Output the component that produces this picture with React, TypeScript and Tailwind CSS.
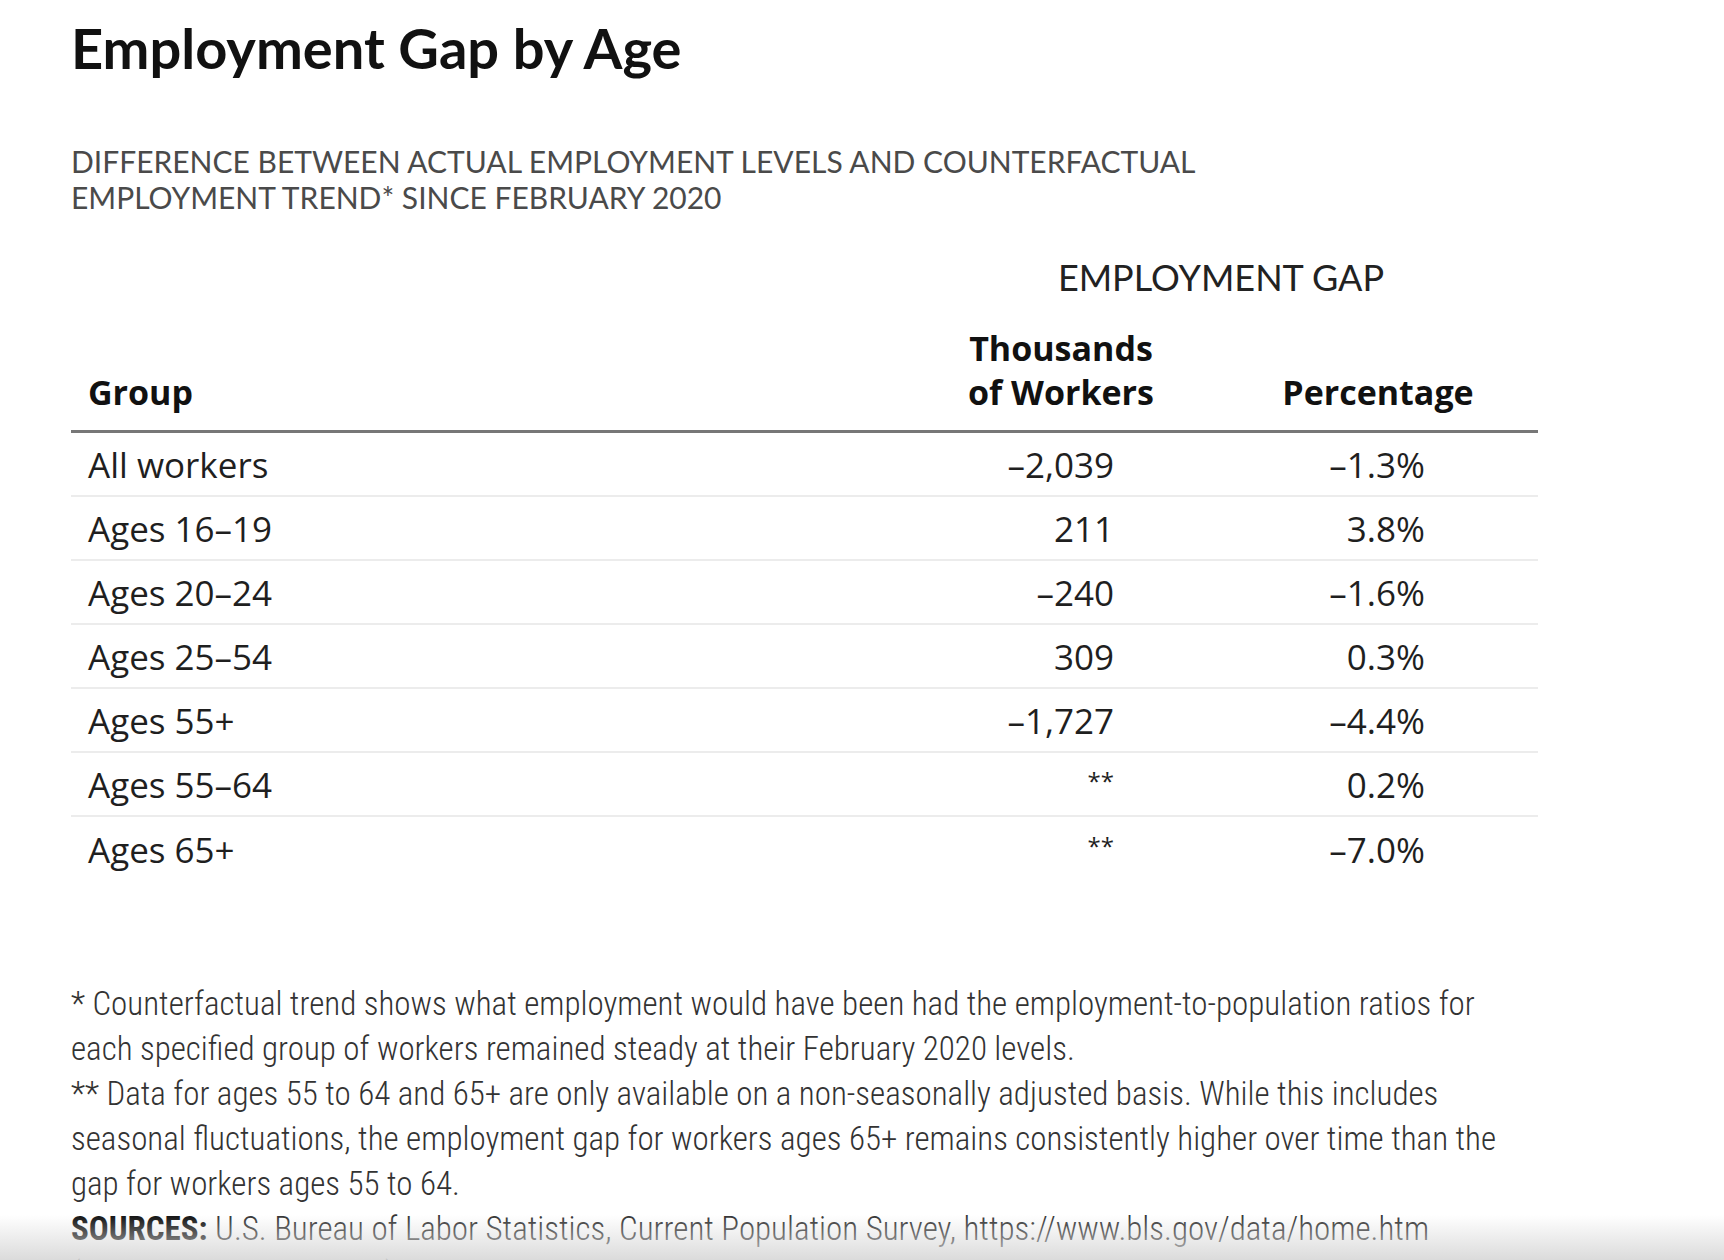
import React from "react";

const rows: [string, string, string][] = [
  ["All workers", "–2,039", "–1.3%"],
  ["Ages 16–19", "211", "3.8%"],
  ["Ages 20–24", "–240", "–1.6%"],
  ["Ages 25–54", "309", "0.3%"],
  ["Ages 55+", "–1,727", "–4.4%"],
  ["Ages 55–64", "**", "0.2%"],
  ["Ages 65+", "**", "–7.0%"],
];

const body = { fontFamily: "'Open Sans', Lato, sans-serif" };

export default function App() {
  return (
    <div className="relative w-[1724px] h-[1260px] overflow-hidden bg-white text-[#1a1a1a]">
      <div className="pl-[71px] pt-[16px]" style={{ fontFamily: "Lato, 'Open Sans', sans-serif" }}>
        <h1 className="text-[56px] leading-[64px] font-bold text-[#111]">Employment Gap by Age</h1>
        <p className="mt-[63px] text-[30px] leading-[36px] text-[#4a4a4a] font-normal">
          DIFFERENCE BETWEEN ACTUAL EMPLOYMENT LEVELS AND COUNTERFACTUAL
          <br />
          EMPLOYMENT TREND* SINCE FEBRUARY 2020
        </p>

        <div className="mt-[42px] w-[1467px]">
          <div className="grid grid-cols-[833px_634px]">
            <div />
            <div className="text-center text-[36px] leading-[40px] text-[#222]">EMPLOYMENT GAP</div>
          </div>
          <div
            className="grid grid-cols-[833px_314px_320px] items-end mt-[29px] pb-[16px] border-b-[3px] border-[#777]"
            style={body}
          >
            <div className="pl-[17px] text-[34px] leading-[44px] font-bold text-[#111]">Group</div>
            <div className="text-center text-[34px] leading-[44px] font-bold text-[#111]">
              Thousands
              <br />
              of Workers
            </div>
            <div className="text-center text-[34px] leading-[44px] font-bold text-[#111]">Percentage</div>
          </div>
          {rows.map((r, i) => (
            <div
              key={r[0]}
              style={body}
              className={
                "grid grid-cols-[833px_314px_320px] items-center h-[64px] pt-[3px] text-[35px] text-[#1f1f1f] " +
                (i < rows.length - 1 ? "border-b-2 border-[#ececec]" : "")
              }
            >
              <div className="pl-[17px]">{r[0]}</div>
              <div className="text-right pr-[104px]">
                {r[1] === "**" ? <span className="relative top-[-8px] text-[24px]">**</span> : r[1]}
              </div>
              <div className="text-right pr-[113px]">{r[2]}</div>
            </div>
          ))}
        </div>
      </div>

      <div
        className="ml-[71px] mt-[100px] w-[1440px] text-[33px] leading-[45px] text-[#333] font-light"
        style={{ fontFamily: "'Roboto Condensed', 'Liberation Sans Narrow', 'DejaVu Sans Condensed', Roboto, sans-serif" }}
      >
        <p>* Counterfactual trend shows what employment would have been had the employment-to-population ratios for each specified group of workers remained steady at their February 2020 levels.</p>
        <p>** Data for ages 55 to 64 and 65+ are only available on a non-seasonally adjusted basis. While this includes seasonal fluctuations, the employment gap for workers ages 65+ remains consistently higher over time than the gap for workers ages 55 to 64.</p>
        <p>
          <span className="font-bold text-[#111]">SOURCES:</span> U.S. Bureau of Labor Statistics, Current Population Survey, https://www.bls.gov/data/home.htm
        </p>
        <p>(accessed April 14, 2022).</p>
      </div>

      <div className="absolute left-0 right-0 bottom-0 h-[45px] bg-gradient-to-b from-[rgba(230,230,230,0)] to-[rgba(215,215,215,0.9)] pointer-events-none" />
    </div>
  );
}
